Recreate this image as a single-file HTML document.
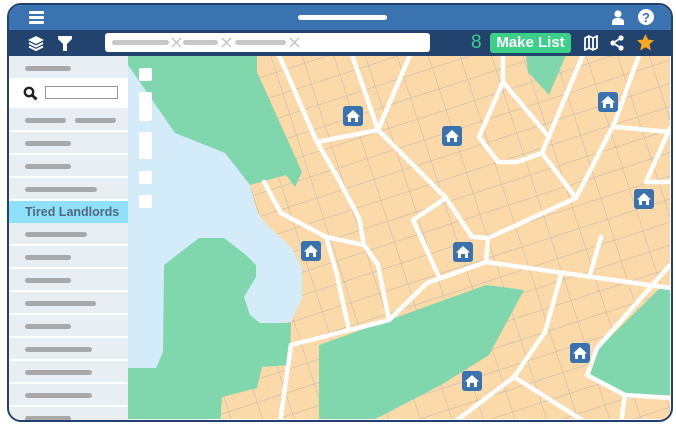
<!DOCTYPE html>
<html><head><style>
html,body{margin:0;padding:0;width:676px;height:425px;overflow:hidden;background:#fff;font-family:"Liberation Sans",sans-serif}
.frame{position:absolute;left:7px;top:3px;width:662px;height:415px;border:2px solid #23406e;border-radius:14px;overflow:hidden;background:#fff}
.top{position:absolute;left:0;top:0;width:100%;height:25px;background:#3b72b0}
.bar2{position:absolute;left:0;top:25px;width:100%;height:26px;background:#23436f}
.side{position:absolute;left:0;top:51px;width:119px;height:370px;background:#e9eef2}
.row{position:absolute;left:0;width:119px;border-bottom:2px solid #fff;box-sizing:border-box}
.g{position:absolute;height:5px;border-radius:3px;background:#a9a9a9}
.x{position:absolute;top:4px}
</style></head><body>
<div class="frame">
 <div class="top">
  <div style="position:absolute;left:20px;top:6px;width:15px;height:3px;background:#fff;box-shadow:0 5px 0 #fff,0 10px 0 #fff;border-radius:1px"></div>
  <div style="position:absolute;left:289px;top:10px;width:89px;height:5px;background:#fff;border-radius:3px"></div>
  <svg style="position:absolute;left:601px;top:4px" width="16" height="17" viewBox="0 0 16 17"><circle cx="8" cy="5" r="3.6" fill="#fff"/><path d="M2 16v-3c0-2.5 2-4 6-4s6 1.5 6 4v3z" fill="#fff"/></svg>
  <svg style="position:absolute;left:628px;top:3px" width="18" height="18" viewBox="0 0 18 18"><circle cx="9" cy="9" r="8" fill="#fff"/><text x="9" y="14" font-size="13" font-weight="bold" text-anchor="middle" fill="#3b72b0" font-family="Liberation Sans">?</text></svg>
 </div>
 <div class="bar2">
  <svg style="position:absolute;left:18px;top:5px" width="18" height="16" viewBox="0 0 18 16"><path d="M9 1L17 5 9 9 1 5z" fill="#fff"/><path d="M2 8l7 3.5 7-3.5M2 11.5l7 3.5 7-3.5" stroke="#fff" stroke-width="2" fill="none"/></svg>
  <svg style="position:absolute;left:49px;top:6px" width="14" height="15" viewBox="0 0 14 15"><path d="M0 0h14v3l-5 5v7h-4v-7l-5-5z" fill="#fff"/></svg>
  <div style="position:absolute;left:96px;top:3px;width:325px;height:19px;background:#fff;border-radius:3px">
   <div class="g" style="left:7px;top:7px;width:57px;background:#c8c8c8"></div>
   <svg class="x" style="left:66px" width="11" height="11"><path d="M1 1L10 10M10 1L1 10" stroke="#c0c0c0" stroke-width="1.3"/></svg>
   <div class="g" style="left:78px;top:7px;width:35px;background:#c8c8c8"></div>
   <svg class="x" style="left:116px" width="11" height="11"><path d="M1 1L10 10M10 1L1 10" stroke="#c0c0c0" stroke-width="1.3"/></svg>
   <div class="g" style="left:130px;top:7px;width:51px;background:#c8c8c8"></div>
   <svg class="x" style="left:184px" width="11" height="11"><path d="M1 1L10 10M10 1L1 10" stroke="#c0c0c0" stroke-width="1.3"/></svg>
  </div>
  <div style="position:absolute;left:462px;top:2px;color:#3ccf8a;font-size:19px;line-height:22px">8</div>
  <div style="position:absolute;left:481px;top:3px;width:81px;height:20px;background:#3ccf8a;border-radius:3px;color:#fff;font-weight:bold;font-size:15px;line-height:20px;text-align:center">Make List</div>
  <svg style="position:absolute;left:575px;top:5px" width="14" height="16" viewBox="0 0 14 16"><path d="M1 3l4-2 4 2 4-2v12l-4 2-4-2-4 2z M5 1v12 M9 3v12" stroke="#fff" stroke-width="1.8" fill="none" stroke-linejoin="round"/></svg>
  <svg style="position:absolute;left:600px;top:5px" width="16" height="16" viewBox="0 0 16 16"><circle cx="12" cy="3" r="2.6" fill="#fff"/><circle cx="4" cy="8" r="2.6" fill="#fff"/><circle cx="12" cy="13" r="2.6" fill="#fff"/><path d="M12 3L4 8l8 5" stroke="#fff" stroke-width="1.8" fill="none"/></svg>
  <svg style="position:absolute;left:627px;top:3px" width="19" height="19" viewBox="0 0 20 20"><path d="M10 1l2.7 6 6.3.6-4.8 4.3 1.4 6.4L10 15l-5.6 3.3 1.4-6.4L1 7.6l6.3-.6z" fill="#f7a81b"/></svg>
 </div>
 <div class="side">
  <div class="row" style="top:0;height:23px;border:none"><div class="g" style="left:16px;top:10px;width:46px"></div></div>
  <div class="row" style="top:22px;height:30px;background:#fff;border:none">
   <svg style="position:absolute;left:14px;top:8px" width="15" height="15" viewBox="0 0 15 15"><circle cx="6" cy="6" r="4.2" stroke="#222" stroke-width="2.4" fill="none"/><path d="M9 9l4.5 4.5" stroke="#222" stroke-width="3"/></svg>
   <div style="position:absolute;left:36px;top:8px;width:71px;height:11px;border:1px solid #999"></div>
  </div>
  <div class="row" style="top:52px;height:24px"><div class="g" style="left:16px;top:10px;width:41px"></div><div class="g" style="left:66px;top:10px;width:41px"></div></div>
  <div class="row" style="top:76px;height:23px"><div class="g" style="left:16px;top:9px;width:46px"></div></div>
  <div class="row" style="top:99px;height:23px"><div class="g" style="left:16px;top:9px;width:46px"></div></div>
  <div class="row" style="top:122px;height:23px"><div class="g" style="left:16px;top:9px;width:72px"></div></div>
  <div class="row" style="top:145px;height:22px;background:#8fe0fb;border:none;color:#4f6a7c;font-weight:bold;font-size:12.5px;line-height:22px;padding-left:16px">Tired Landlords</div>
  <div class="row" style="top:167px;height:23px"><div class="g" style="left:16px;top:9px;width:62px"></div></div>
  <div class="row" style="top:190px;height:23px"><div class="g" style="left:16px;top:9px;width:46px"></div></div>
  <div class="row" style="top:213px;height:23px"><div class="g" style="left:16px;top:9px;width:46px"></div></div>
  <div class="row" style="top:236px;height:23px"><div class="g" style="left:16px;top:9px;width:71px"></div></div>
  <div class="row" style="top:259px;height:23px"><div class="g" style="left:16px;top:9px;width:46px"></div></div>
  <div class="row" style="top:282px;height:23px"><div class="g" style="left:16px;top:9px;width:67px"></div></div>
  <div class="row" style="top:305px;height:23px"><div class="g" style="left:16px;top:9px;width:67px"></div></div>
  <div class="row" style="top:328px;height:23px"><div class="g" style="left:16px;top:9px;width:67px"></div></div>
  <div class="row" style="top:351px;height:23px"><div class="g" style="left:16px;top:9px;width:46px"></div></div>
 </div>
 <svg style="position:absolute;left:-9px;top:-5px" width="676" height="425" viewBox="0 0 676 425">
  <defs>
   <pattern id="p" width="30" height="22" patternUnits="userSpaceOnUse" patternTransform="rotate(-18)">
    <path d="M0 0H30M0 0V22" stroke="#bcb4b0" stroke-width="0.9" fill="none"/>
   </pattern>
   <clipPath id="c"><rect x="128" y="56" width="542" height="363"/></clipPath>
   <g id="h"><rect x="-10" y="-10" width="20" height="20" rx="3" fill="#3a72b0"/><path d="M0 -6L7 0.5H5V6H2V2H-2V6H-5V0.5H-7z" fill="#fff"/></g>
  </defs>
  <g clip-path="url(#c)">
   <rect x="128" y="55" width="545" height="370" fill="#fbd9a8"/>
   <rect x="128" y="55" width="545" height="370" fill="url(#p)"/>
   <path d="M128 55H257L250 185L257 212L267 225L291 247L302 268L302 298L291 322L260 324L128 380z" fill="#d4ebfa"/>
   <path d="M128 55L257 55L257 72L302 172L295 187L286 175L250 185L225 153L175 133L128 65z" fill="#81d7ad"/>
   <path d="M199 238L224 238L246 255L256 265L256 277L244 297L250 315L260 323L291 323L290 365L262 367L257 388L222 397L220 425L128 425L128 368L156 368L163 352L164 265z" fill="#81d7ad"/>
   <path d="M319 345L389 320L486 285L524 290L489 355L441 385L364 425L319 425z" fill="#81d7ad"/>
   <path d="M526 55L566 55L549 95L528 72z" fill="#81d7ad"/>
   <path d="M672 288L672 395L625 395L590 375L599 348L660 288z" fill="#81d7ad"/>
   <g stroke="#fff" stroke-width="4.5" fill="none" stroke-linejoin="round" stroke-linecap="round">
    <path d="M279 55L316 140L340 182L359 218L364 245L378 265L389 320"/>
    <path d="M317 142L378 130L352 55"/>
    <path d="M378 130L410 55"/>
    <path d="M378 130L446 198L472 237L488 238L486 262"/>
    <path d="M446 198L413 220L439 277"/>
    <path d="M264 182L281 213L326 237L364 245"/>
    <path d="M326 237L337 275L349 330"/>
    <path d="M291 345L389 320L427 283L486 262L670 288"/>
    <path d="M291 345L279 430"/>
    <path d="M488 238L576 198L615 122L639 55"/>
    <path d="M576 198L542 153L583 55"/>
    <path d="M542 153L517 162L498 162L479 137L503 82L503 55"/>
    <path d="M503 82L549 137"/>
    <path d="M615 127L670 132"/>
    <path d="M646 182L670 182M646 182L670 128"/>
    <path d="M561 275L545 332L514 377L444 430"/>
    <path d="M514 377L590 425"/>
    <path d="M601 237L590 275"/>
    <path d="M670 265L597 348L587 375L625 395L670 398"/>
    <path d="M625 395L620 430"/>
   </g>
   <use href="#h" x="353" y="116"/>
   <use href="#h" x="452" y="136"/>
   <use href="#h" x="608" y="102"/>
   <use href="#h" x="644" y="199"/>
   <use href="#h" x="311" y="251"/>
   <use href="#h" x="463" y="252"/>
   <use href="#h" x="580" y="353"/>
   <use href="#h" x="472" y="381"/>
   <g fill="#fff">
    <rect x="139" y="68" width="13" height="13" rx="2"/>
    <rect x="139" y="92" width="13" height="29" rx="2"/>
    <rect x="139" y="132" width="13" height="27" rx="2"/>
    <rect x="139" y="171" width="13" height="13" rx="2"/>
    <rect x="139" y="195" width="13" height="13" rx="2"/>
   </g>
  </g>
 </svg>
</div>
</body></html>
